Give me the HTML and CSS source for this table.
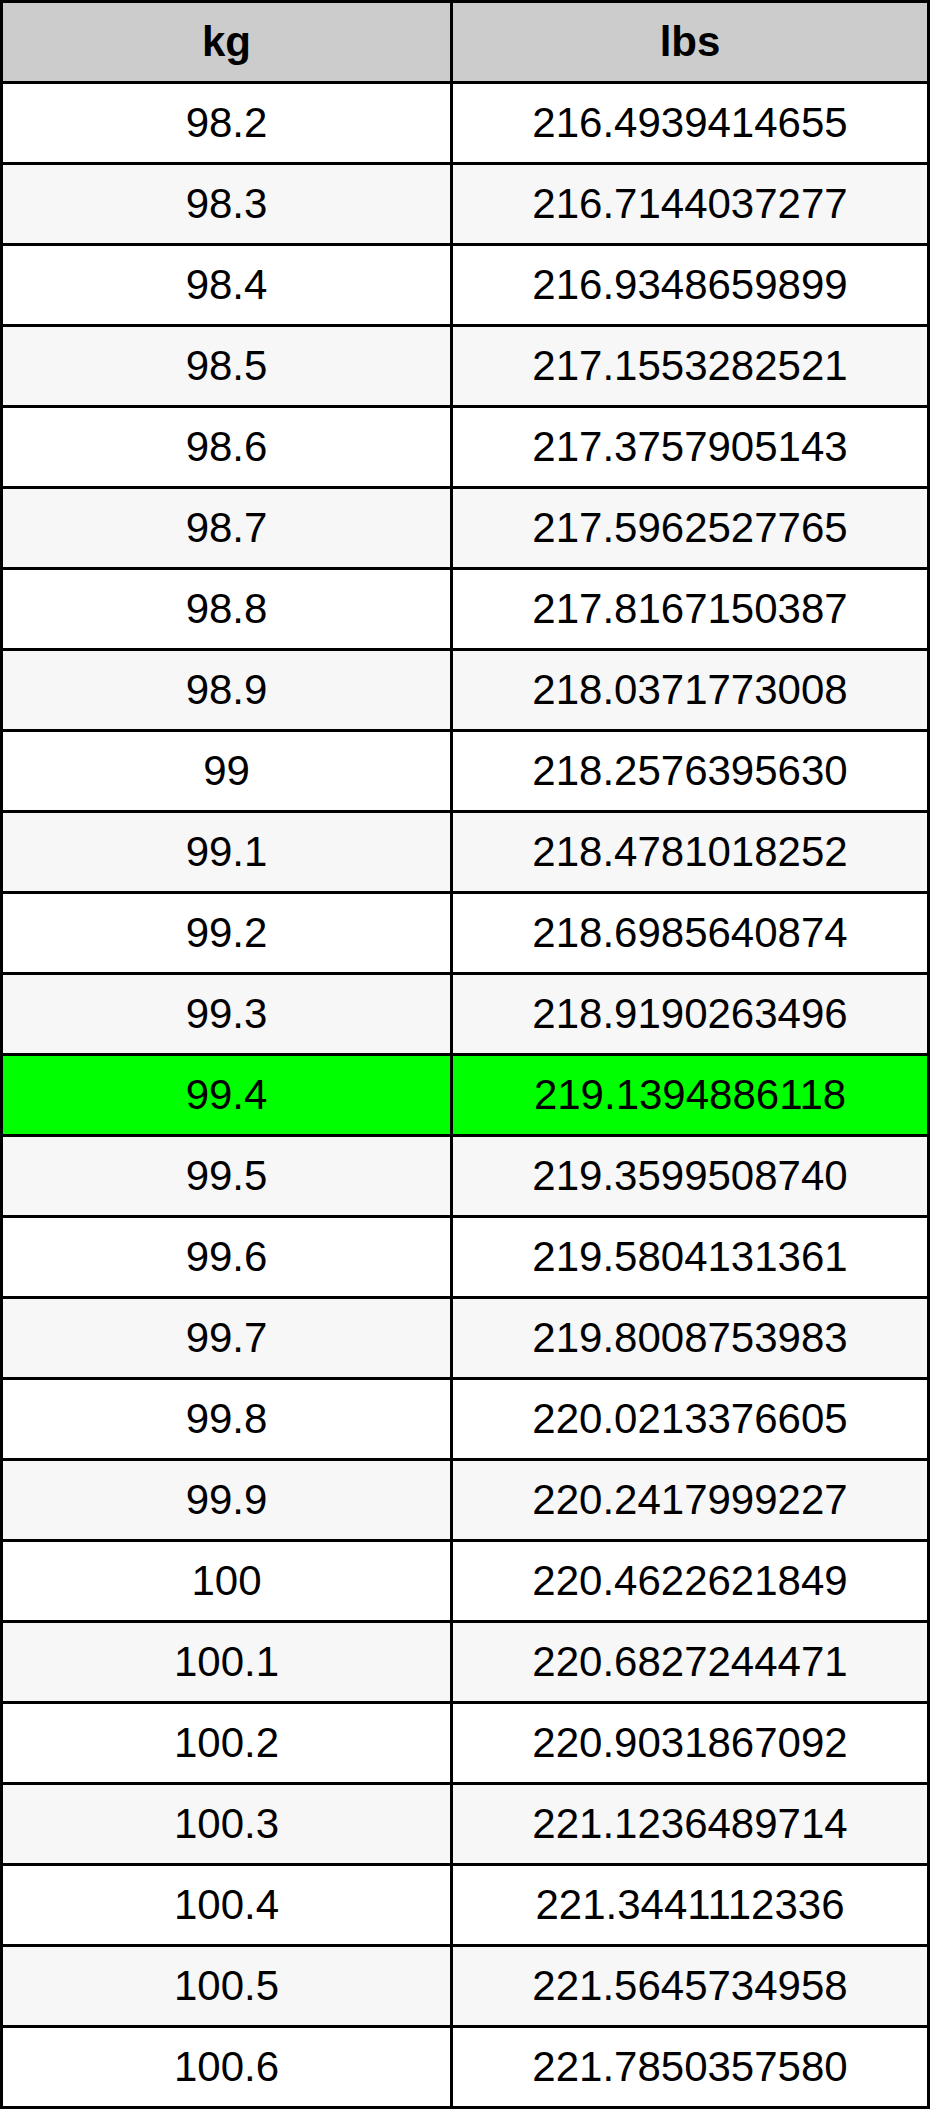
FILE: index.html
```html
<!DOCTYPE html>
<html>
<head>
<meta charset="utf-8">
<title>kg to lbs</title>
<link rel="stylesheet" href="styles.css">
</head>
<body>
<table class="conv">
<colgroup><col class="c-kg"><col class="c-lbs"></colgroup>
<thead>
<tr><th>kg</th><th>lbs</th></tr>
</thead>
<tbody>
<tr><td>98.2</td><td>216.4939414655</td></tr>
<tr><td>98.3</td><td>216.7144037277</td></tr>
<tr><td>98.4</td><td>216.9348659899</td></tr>
<tr><td>98.5</td><td>217.1553282521</td></tr>
<tr><td>98.6</td><td>217.3757905143</td></tr>
<tr><td>98.7</td><td>217.5962527765</td></tr>
<tr><td>98.8</td><td>217.8167150387</td></tr>
<tr><td>98.9</td><td>218.0371773008</td></tr>
<tr><td>99</td><td>218.2576395630</td></tr>
<tr><td>99.1</td><td>218.4781018252</td></tr>
<tr><td>99.2</td><td>218.6985640874</td></tr>
<tr><td>99.3</td><td>218.9190263496</td></tr>
<tr class="hl"><td>99.4</td><td>219.1394886118</td></tr>
<tr><td>99.5</td><td>219.3599508740</td></tr>
<tr><td>99.6</td><td>219.5804131361</td></tr>
<tr><td>99.7</td><td>219.8008753983</td></tr>
<tr><td>99.8</td><td>220.0213376605</td></tr>
<tr><td>99.9</td><td>220.2417999227</td></tr>
<tr><td>100</td><td>220.4622621849</td></tr>
<tr><td>100.1</td><td>220.6827244471</td></tr>
<tr><td>100.2</td><td>220.9031867092</td></tr>
<tr><td>100.3</td><td>221.1236489714</td></tr>
<tr><td>100.4</td><td>221.3441112336</td></tr>
<tr><td>100.5</td><td>221.5645734958</td></tr>
<tr><td>100.6</td><td>221.7850357580</td></tr>
</tbody>
</table>
</body>
</html>
```

FILE: styles.css
```css
html, body {
  margin: 0;
  padding: 0;
  background: #ffffff;
}

.conv {
  width: 930px;
  table-layout: fixed;
  border-collapse: separate;
  border-spacing: 0;
  border-top: 3px solid #000;
  border-left: 3px solid #000;
  font-family: "Liberation Sans", Arial, Helvetica, sans-serif;
  font-size: 42px;
  color: #000;
}

.c-kg { width: 450px; }
.c-lbs { width: 477px; }

.conv th,
.conv td {
  height: 78px;
  padding: 0;
  line-height: 78px;
  text-align: center;
  vertical-align: middle;
  border-right: 3px solid #000;
  border-bottom: 3px solid #000;
}

.conv th {
  background: #cccccc;
  font-weight: bold;
}

.conv tbody tr:nth-child(even) td {
  background: #f7f7f7;
}

.conv tbody tr.hl td {
  background: #00ff00;
}
```
